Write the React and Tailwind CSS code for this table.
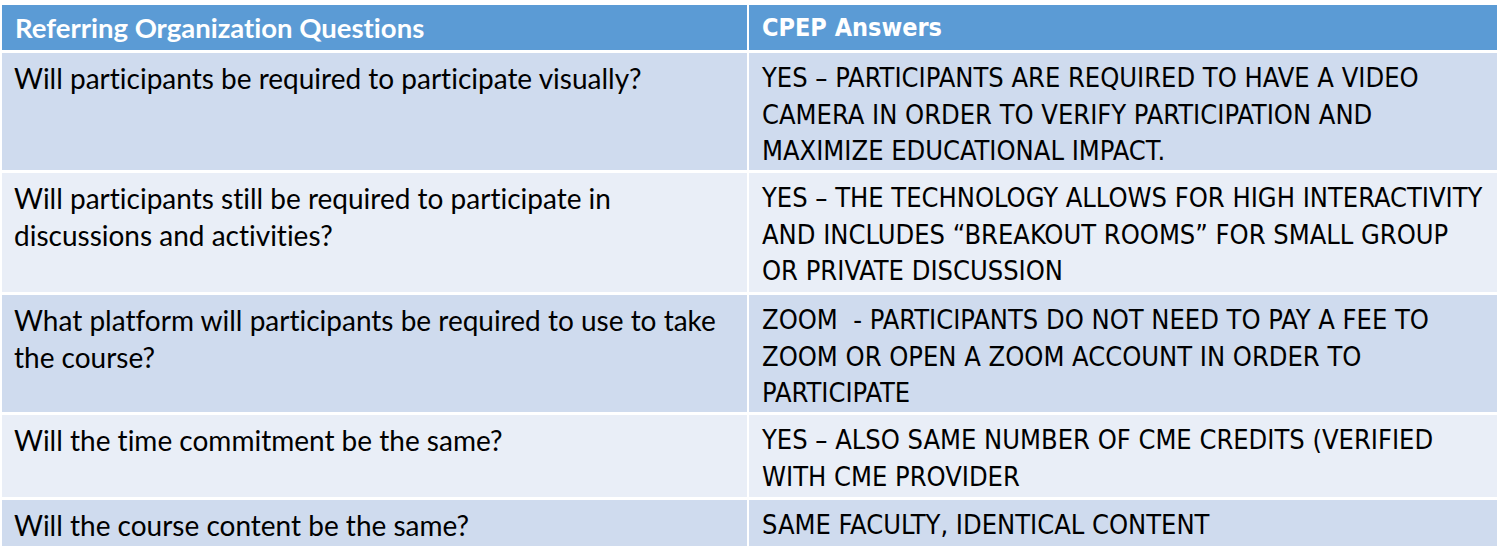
const rows = [
  {
    h: "h-[117px]",
    q: ["Will participants be required to participate visually?"],
    a: [
      "YES – PARTICIPANTS ARE REQUIRED TO HAVE A VIDEO",
      "CAMERA IN ORDER TO VERIFY PARTICIPATION AND",
      "MAXIMIZE EDUCATIONAL IMPACT.",
    ],
  },
  {
    h: "h-[119px]",
    q: ["Will participants still be required to participate in", "discussions and activities?"],
    a: [
      "YES – THE TECHNOLOGY ALLOWS FOR HIGH INTERACTIVITY",
      "AND INCLUDES “BREAKOUT ROOMS” FOR SMALL GROUP",
      "OR PRIVATE DISCUSSION",
    ],
  },
  {
    h: "h-[117px]",
    q: ["What platform will participants be required to use to take", "the course?"],
    a: [
      "ZOOM  - PARTICIPANTS DO NOT NEED TO PAY A FEE TO",
      "ZOOM OR OPEN A ZOOM ACCOUNT IN ORDER TO",
      "PARTICIPATE",
    ],
  },
  {
    h: "h-[82px]",
    q: ["Will the time commitment be the same?"],
    a: ["YES – ALSO SAME NUMBER OF CME CREDITS (VERIFIED", "WITH CME PROVIDER"],
  },
  {
    h: "h-[46px]",
    q: ["Will the course content be the same?"],
    a: ["SAME FACULTY, IDENTICAL CONTENT"],
  },
];

const narrow = "font-['Liberation_Sans_Narrow','DejaVu_Sans_Condensed','Roboto_Condensed','Liberation_Sans',sans-serif]";

export default function App() {
  return (
    <div className="w-[1500px] h-[560px] bg-white pt-[5px] pl-[2px] font-['Lato','Liberation_Sans',sans-serif] text-black [font-variant-ligatures:none]">
      <div className="w-[1495px] flex flex-col gap-[3px]">
        <div className="grid grid-cols-[745px_1fr] gap-[2px] h-[45px]">
          <div className="bg-[#5b9bd5] pl-[13px] flex items-center text-white font-bold text-[27.5px]">
            Referring Organization Questions
          </div>
          <div className={`bg-[#5b9bd5] pl-[13px] flex items-center text-white font-bold text-[25px] ${narrow}`}>
            CPEP Answers
          </div>
        </div>
        {rows.map((r, i) => (
          <div key={i} className={`grid grid-cols-[745px_1fr] gap-[2px] ${r.h}`}>
            <div className={`${i % 2 === 0 ? "bg-[#cfdbee]" : "bg-[#e9eef7]"} pl-[12px] pt-[7px] text-[28px] leading-[36.5px]`}>
              {r.q.map((l, j) => (
                <div key={j} className="whitespace-pre">{l}</div>
              ))}
            </div>
            <div className={`${i % 2 === 0 ? "bg-[#cfdbee]" : "bg-[#e9eef7]"} pl-[13px] pt-[7px] text-[27px] leading-[36.5px] ${narrow}`}>
              {r.a.map((l, j) => (
                <div key={j} className="whitespace-pre">{l}</div>
              ))}
            </div>
          </div>
        ))}
      </div>
    </div>
  );
}
